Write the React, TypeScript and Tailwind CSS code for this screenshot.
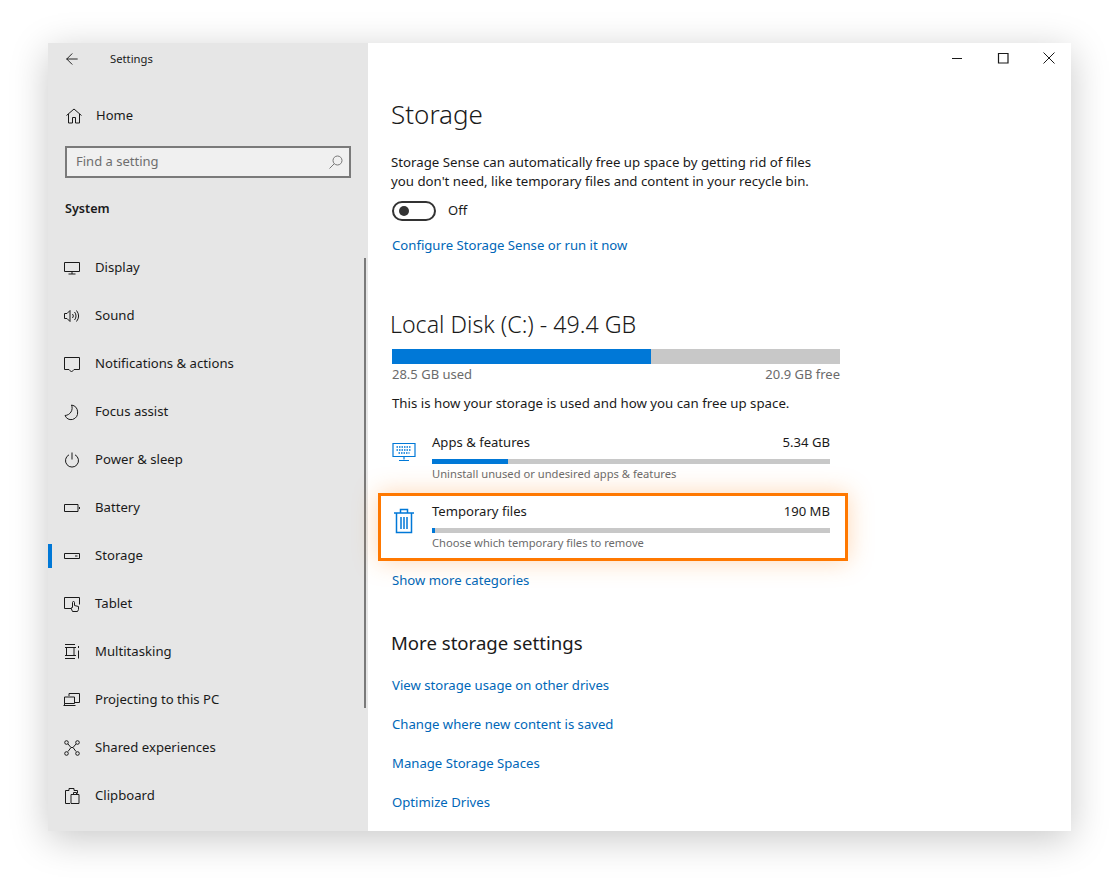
import { ArrowLeft } from 'lucide-react'
import type { ReactNode } from 'react'

const FONT = "font-['Noto_Sans',sans-serif]"

function Glyph({ children, className = 'text-[#1a1a1a]' }: { children: ReactNode; className?: string }) {
  return (
    <svg
      viewBox="0 0 18 18"
      className={`h-[18px] w-[18px] shrink-0 ${className}`}
      fill="none"
      stroke="currentColor"
      strokeWidth="1"
      aria-hidden
    >
      {children}
    </svg>
  )
}

const NAV = [
  {
    label: 'Display',
    icon: <path d="M1.500 3.500h15v9h-15zM9 12.500v2.500M5.500 15h7" />,
  },
  {
    label: 'Sound',
    icon: <path d="M1.500 6.500h2.500l3-3v11l-3-3H1.500zM9.500 7a3 3 0 0 1 0 4M11.500 5a6 6 0 0 1 0 8M13.500 3.500a9 9 0 0 1 0 11" />,
  },
  {
    label: 'Notifications & actions',
    icon: <path d="M1.500 2.500h15v12h-5.500L8.500 17 6 14.500H1.500z" />,
  },
  {
    label: 'Focus assist',
    icon: <path d="M8.500 2a7.500 7.500 0 0 1 1 14.500A7 7 0 0 1 2 12.500 7.500 7.500 0 0 0 8.500 2z" />,
  },
  {
    label: 'Power & sleep',
    icon: <path d="M6 3.800a6.500 6.500 0 1 0 6 0M9 1.500v7" />,
  },
  {
    label: 'Battery',
    icon: <path d="M1.500 5.500h13.500v7H1.500zM16.500 8v2" />,
  },
  {
    label: 'Storage',
    active: true,
    icon: <path d="M1.500 6.500h15v5h-15zM12 9h2.500" />,
  },
  {
    label: 'Tablet',
    icon: <path d="M8 13.500H1.500v-11h15v7M9.500 16.500 8 13l1.500-.5V7.500a1 1 0 0 1 2 0v3l4 1v3l-1 2z" />,
  },
  {
    label: 'Multitasking',
    icon: <path d="M2 1.500h10M3.500 4.500h7.500v8H3.500zM2 15.500h10M2 4.500h11M2 12.500h11M15.500 7.500v8M15.500 3v2" />,
  },
  {
    label: 'Projecting to this PC',
    icon: <path d="M6 5V2.500h10.500v9H12M1.500 6h10v6.500h-10zM.5 14.500h12M1.500 12.500v2" />,
  },
  {
    label: 'Shared experiences',
    icon: (
      <>
        <circle cx="3.500" cy="3.500" r="1.800" />
        <circle cx="14.500" cy="3.500" r="1.800" />
        <circle cx="3.500" cy="14.500" r="1.800" />
        <circle cx="14.500" cy="14.500" r="1.800" />
        <path d="m5 5 3 3.500-3 4M13 5l-3 3.500 3 4M8 8.500h2" />
      </>
    ),
  },
  {
    label: 'Clipboard',
    icon: <path d="M7 16.500H2.500v-13H6V1.500h5v2h3.500v3M8 7.500h8v9H8zM10.500 7.500V5.500h3v2" />,
  },
]

const STORAGE_LINKS = [
  'View storage usage on other drives',
  'Change where new content is saved',
  'Manage Storage Spaces',
  'Optimize Drives',
]

function Category({
  icon,
  title,
  size,
  hint,
  fill,
}: {
  icon: ReactNode
  title: string
  size: string
  hint: string
  fill: string
}) {
  return (
    <div className="flex h-[69px] w-[438px] items-start">
      <div className="flex h-10 w-10 shrink-0 items-center">{icon}</div>
      <div className="min-w-0 flex-1">
        <div className="flex h-[22px] items-center justify-between text-[13.100px] text-[#1a1a1a]">
          <span>{title}</span>
          <span>{size}</span>
        </div>
        <div className="mt-[5px] h-[5px] bg-[#c8c8c8]">
          <div className="h-full bg-[#0078d7]" style={{ width: fill }} />
        </div>
        <p className="mt-px text-[11.200px] leading-[18px] text-[#6b6b6b]">{hint}</p>
      </div>
    </div>
  )
}

export default function App() {
  return (
    <div className={`h-[880px] w-[1120px] overflow-hidden bg-white pl-12 pt-[43px] ${FONT}`}>
      <div className="flex h-[788px] w-[1023px] bg-white shadow-[0_8px_36px_rgba(0,0,0,0.22)]">
        {/* Sidebar */}
        <aside className="relative flex h-full w-[320px] shrink-0 flex-col bg-[#e6e6e6]">
          <div className="flex h-[32px] items-center pl-[15px] text-[#1a1a1a]">
            <ArrowLeft className="h-[18px] w-[18px]" strokeWidth={1.250} aria-hidden />
            <span className="ml-[29px] text-[11.250px]">Settings</span>
          </div>
          <div className="mt-[17px] flex h-[48px] items-center pl-[17px] text-[#1a1a1a]">
            <Glyph>
              <path d="M1.500 8.500 9 2l7.500 6.500M3.500 7v9h4v-5.500h3V16h4V7" />
            </Glyph>
            <span className="ml-[13px] text-[13px]">Home</span>
          </div>
          <div className="mx-[17px] mt-[6px] flex h-8 items-center justify-between border-2 border-[#7a7a7a] bg-[#f0f0f0] pl-[9px] pr-[6px] text-[13px] text-[#6e6e6e]">
            <span>Find a setting</span>
            <svg viewBox="0 0 14 14" className="h-[14px] w-[14px] text-[#777777]" fill="none" stroke="currentColor" strokeWidth="1" aria-hidden>
              <circle cx="8.500" cy="5.500" r="4.500" />
              <path d="M5.300 8.700.5 13.500" />
            </svg>
          </div>
          <h2 className="ml-[17px] mt-[20px] h-[22px] text-[12.600px] font-semibold leading-[22px] text-[#1a1a1a]">System</h2>
          <nav className="mt-[24px] flex flex-col">
            {NAV.map((item) => (
              <div key={item.label} className="relative flex h-12 items-center pl-[15px] text-[#1a1a1a]">
                {item.active && <span className="absolute left-0 top-3 h-6 w-1 bg-[#0078d7]" />}
                <Glyph>{item.icon}</Glyph>
                <span className="ml-[14px] text-[13.150px]">{item.label}</span>
              </div>
            ))}
          </nav>
          <div className="absolute left-[316px] top-[215px] h-[450px] w-[2px] bg-[#7a7a7a]" />
        </aside>

        {/* Content */}
        <main className="relative min-w-0 flex-1 pl-[23px] text-[#1a1a1a]">
          <div className="absolute right-[16px] top-[9px] flex items-center gap-[34px]">
            <svg viewBox="0 0 12 12" className="h-3 w-3" fill="none" stroke="currentColor" strokeWidth="1" aria-hidden>
              <path d="M1 6.500h10" />
            </svg>
            <svg viewBox="0 0 12 12" className="h-3 w-3" fill="none" stroke="currentColor" strokeWidth="1.200" aria-hidden>
              <path d="M1.500 1.500h9.500v9.500H1.500z" />
            </svg>
            <svg viewBox="0 0 12 12" className="h-3 w-3" fill="none" stroke="currentColor" strokeWidth="1" aria-hidden>
              <path d="M.5.500l11 11M11.500.500l-11 11" />
            </svg>
          </div>

          <h1 className="mt-[51px] h-10 text-[26px] font-light leading-10">Storage</h1>
          <p className="mt-[19px] w-[460px] text-[13.250px] leading-[19px]">
            Storage Sense can automatically free up space by getting rid of files
            <br />
            you don&apos;t need, like temporary files and content in your recycle bin.
          </p>
          <div className="mt-[9px] flex h-[22px] items-center pl-px">
            <div className="flex h-5 w-11 items-center rounded-full border-2 border-[#333333] pl-[5px]">
              <span className="h-[10px] w-[10px] rounded-full bg-[#333333]" />
            </div>
            <span className="ml-[12px] text-[13px]">Off</span>
          </div>
          <a className="mt-[13px] block h-5 pl-px text-[13.150px] leading-5 text-[#0067b8]">Configure Storage Sense or run it now</a>

          <h2 className="-ml-px mt-[52px] h-[34px] text-[23.200px] font-light leading-[34px]">Local Disk (C:) - 49.4 GB</h2>
          <div className="ml-px mt-[8px] h-[15px] w-[448px] bg-[#c8c8c8]">
            <div className="h-full w-[259px] bg-[#0078d7]" />
          </div>
          <div className="ml-px mt-[1px] flex h-5 w-[448px] items-center justify-between text-[13px] text-[#6b6b6b]">
            <span>28.5 GB used</span>
            <span>20.9 GB free</span>
          </div>
          <p className="mt-[8px] h-5 pl-px text-[13.250px] leading-5">This is how your storage is used and how you can free up space.</p>

          <div className="relative ml-px mt-[19px]">
            <Category
              icon={
                <svg viewBox="0 0 24 20" className="h-5 w-6 text-[#0078d7]" fill="none" stroke="currentColor" strokeWidth="1.200" aria-hidden>
                  <path d="M1 1.500h22v13H1zM12 14.500v3M7 18.500h10" />
                  <path d="M4.500 5h15M4.500 8h15M6.500 11h11" strokeDasharray="1.500 1" strokeWidth="1.500" />
                </svg>
              }
              title="Apps & features"
              size="5.34 GB"
              hint="Uninstall unused or undesired apps & features"
              fill="19%"
            />
            <Category
              icon={
                <svg viewBox="0 0 22 26" className="ml-px h-[26px] w-[22px] text-[#0078d7]" fill="none" stroke="currentColor" strokeWidth="1.500" aria-hidden>
                  <path d="M1 5h20M7.500 5V1.500h7V5M3.500 5v19.500h15V5M8 9v12M11 9v12M14 9v12" />
                </svg>
              }
              title="Temporary files"
              size="190 MB"
              hint="Choose which temporary files to remove"
              fill="0.800%"
            />
            {/* highlight round the temporary files row */}
            <div className="absolute left-[-14px] top-[61px] h-[68px] w-[470px] border-[3px] border-[#ff7800] shadow-[0_0_24px_rgba(255,140,40,0.35)]" />
          </div>

          <a className="block h-5 pl-px text-[13.150px] leading-5 text-[#0067b8]">Show more categories</a>

          <h2 className="mt-[39px] h-7 text-[18.600px] leading-7">More storage settings</h2>
          <div className="mt-[18px] flex flex-col gap-[19px] pl-px">
            {STORAGE_LINKS.map((link) => (
              <a key={link} className="block h-5 text-[13.150px] leading-5 text-[#0067b8]">
                {link}
              </a>
            ))}
          </div>
        </main>
      </div>
    </div>
  )
}
